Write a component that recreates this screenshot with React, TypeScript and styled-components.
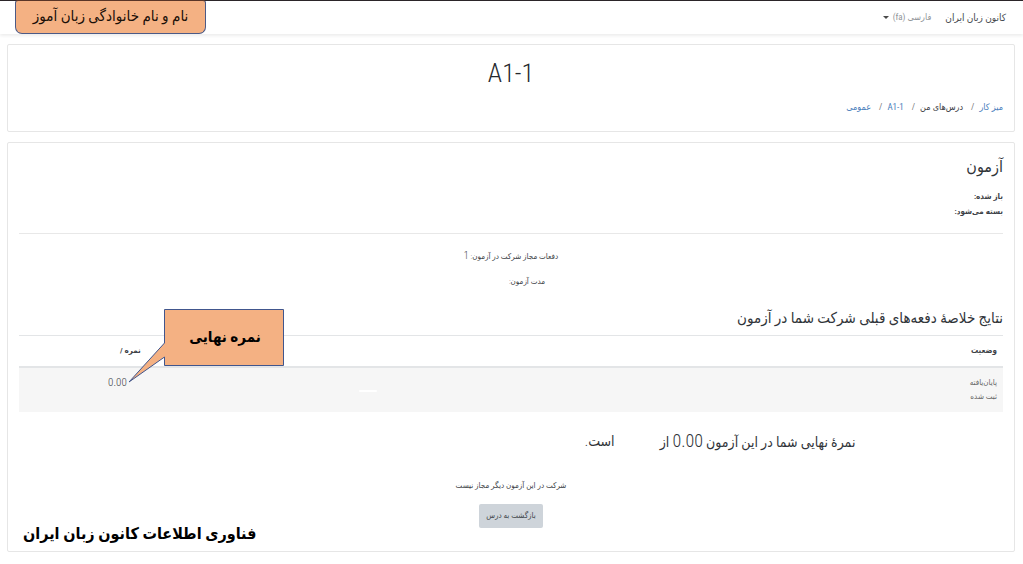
import React from 'react';
import styled, { createGlobalStyle } from 'styled-components';

const GlobalStyle = createGlobalStyle`
  * { box-sizing: border-box; }
  body {
    margin: 0;
    background: #fff;
    color: #3c4146;
    font: 9px/15px 'Roboto Condensed', Roboto, 'DejaVu Sans Condensed', 'DejaVu Sans', sans-serif;
    font-weight: 400;
  }
  h1, h2, h3, p { margin: 0; font-weight: 300; }
  a { color: #4a7ebb; text-decoration: none; }
`;

const Page = styled.div`
  direction: rtl;
  position: relative;
`;

const Navbar = styled.header`
  display: flex;
  align-items: center;
  height: 34px;
  padding: 0 17px;
  gap: 14px;
  border-top: 1px solid #2b2529;
  box-shadow: 0 2px 3px rgba(0, 0, 0, 0.07);
`;

const Brand = styled.a`
  color: #45494e;
  font-size: 10px;
`;

const LanguageButton = styled.button`
  display: flex;
  align-items: center;
  gap: 4px;
  padding: 0;
  border: 0;
  background: none;
  color: #8f9398;
  font: inherit;
`;

const Caret = styled.span`
  border: 3px solid transparent;
  border-top-color: #4a4a4a;
  border-bottom: 0;
`;

const NameTag = styled.div`
  position: absolute;
  top: 0;
  left: 15px;
  width: 191px;
  height: 34px;
  border: 1px solid #4c5a86;
  border-top-color: #5a3527;
  border-radius: 3px 3px 7px 7px;
  background: #f4b183;
  color: #1a0f08;
  font-size: 15px;
  line-height: 30px;
  text-align: center;
`;

const Main = styled.main`
  display: flex;
  flex-direction: column;
  gap: 10px;
  padding: 10px 8px 12px 7px;
`;

const Card = styled.section`
  position: relative;
  border: 1px solid #e6e6e6;
  border-radius: 2px;
  padding: 10px 11px;
`;

const HeaderCard = styled(Card)`
  min-height: 88px;
`;

const CourseTitle = styled.h1`
  font-size: 26px;
  line-height: 36px;
  text-align: center;
  color: #25282c;
`;

const Breadcrumb = styled.ol`
  display: flex;
  gap: 5px;
  margin: 9px 0 0;
  padding: 0;
  list-style: none;
`;

const Crumb = styled.li`
  & + &::before {
    content: '/';
    color: #777;
    padding-left: 8px;
  }
`;

const ActivityCard = styled(Card)`
  min-height: 410px;
`;

const Title = styled.h2`
  font-size: 16px;
  line-height: 28px;
  color: #303439;
`;

const Dates = styled.div`
  margin: 8px 0 14px;
  font-weight: 700;
  font-size: 8px;
`;

const Rule = styled.hr`
  margin: 0;
  border: 0;
  border-top: 1px solid #e8e8e8;
`;

const Info = styled.div`
  display: flex;
  flex-direction: column;
  gap: 10px;
  padding: 14px 0;
  font-size: 8px;
  text-align: center;
`;

const Duration = styled.p`
  padding-left: 32px;
`;

const Count = styled.span`
  font-size: 10px;
`;

const SectionTitle = styled.h3`
  font-size: 15px;
  line-height: 30px;
  color: #303439;
`;

const Attempts = styled.table`
  width: 100%;
  margin-top: 2px;
  border-collapse: collapse;
  table-layout: fixed;
`;

const HeadCell = styled.th<{ $width?: string; $center?: boolean }>`
  width: ${(p) => p.$width ?? 'auto'};
  height: 31px;
  padding: 0 6px;
  padding-left: ${(p) => (p.$center ? '32px' : '6px')};
  border-top: 1px solid #e3e5e7;
  border-bottom: 2px solid #e3e5e7;
  font-size: 8px;
  line-height: 14px;
  text-align: ${(p) => (p.$center ? 'center' : 'right')};
`;

const Cell = styled.td<{ $center?: boolean }>`
  height: 44px;
  padding: 8px 6px;
  background: #f6f6f6;
  font-size: ${(p) => (p.$center ? '11px' : '8px')};
  font-weight: ${(p) => (p.$center ? 300 : 400)};
  line-height: 14px;
  vertical-align: top;
  text-align: ${(p) => (p.$center ? 'center' : 'right')};
`;

const State = styled.span`
  display: block;
  color: #666;
`;

const BlankMark = styled.span`
  display: block;
  width: 18px;
  height: 2px;
  margin: 14px auto 0;
  border-radius: 1px;
  background: #fff;
`;

const FinalGrade = styled.h3`
  display: flex;
  gap: 45px;
  margin-top: 14px;
  padding-right: 15%;
  font-size: 14px;
  line-height: 30px;
  color: #303439;
`;

const Score = styled.span`
  font-size: 18px;
`;

const Feedback = styled.div`
  display: flex;
  flex-direction: column;
  align-items: center;
  gap: 11px;
  margin-top: 21px;
  font-size: 8px;
`;

const BackButton = styled.button`
  height: 24px;
  padding: 0 7px;
  border: 0;
  border-radius: 2px;
  background: #ced4da;
  color: #41464b;
  font: inherit;
`;

const Callout = styled.div`
  position: absolute;
  top: 166px;
  left: 120px;
  width: 157px;
  height: 76px;
`;

const CalloutShape = styled.svg`
  display: block;
`;

const CalloutText = styled.strong`
  position: absolute;
  top: 0;
  right: 0;
  width: 120px;
  color: #000;
  font-size: 15px;
  line-height: 56px;
  text-align: center;
`;

const Credit = styled.strong`
  position: absolute;
  left: 15px;
  bottom: 2px;
  color: #000;
  font-size: 16px;
  line-height: 30px;
`;

export default function App() {
  return (
    <Page lang="fa">
      <GlobalStyle />
      <Navbar>
        <Brand href="#">کانون زبان ایران</Brand>
        <LanguageButton type="button">
          <span>فارسی ‎(fa)‎</span>
          <Caret />
        </LanguageButton>
      </Navbar>
      <NameTag>نام و نام خانوادگی زبان آموز</NameTag>
      <Main>
        <HeaderCard>
          <CourseTitle>A1-1</CourseTitle>
          <nav>
            <Breadcrumb>
              <Crumb><a href="#">میز کار</a></Crumb>
              <Crumb>درس‌های من</Crumb>
              <Crumb><a href="#">A1-1</a></Crumb>
              <Crumb><a href="#">عمومی</a></Crumb>
            </Breadcrumb>
          </nav>
        </HeaderCard>
        <ActivityCard>
          <Title>آزمون</Title>
          <Dates>
            <div>باز شده:</div>
            <div>بسته می‌شود:</div>
          </Dates>
          <Rule />
          <Info>
            <p>دفعات مجاز شرکت در آزمون: <Count>1</Count></p>
            <Duration>مدت آزمون:</Duration>
          </Info>
          <SectionTitle>نتایج خلاصهٔ دفعه‌های قبلی شرکت شما در آزمون</SectionTitle>
          <Attempts>
            <thead>
              <tr>
                <HeadCell>وضعیت</HeadCell>
                <HeadCell $width="31%" />
                <HeadCell $width="20%" $center>نمره /</HeadCell>
              </tr>
            </thead>
            <tbody>
              <tr>
                <Cell>
                  <State>پایان‌یافته</State>
                  <State>ثبت شده</State>
                </Cell>
                <Cell><BlankMark /></Cell>
                <Cell $center>0.00</Cell>
              </tr>
            </tbody>
          </Attempts>
          <FinalGrade>
            <span>نمرهٔ نهایی شما در این آزمون <Score>0.00</Score> از</span>
            <span>است.</span>
          </FinalGrade>
          <Feedback>
            <p>شرکت در این آزمون دیگر مجاز نیست</p>
            <BackButton type="button">بازگشت به درس</BackButton>
          </Feedback>
          <Callout>
            <CalloutShape width="157" height="76" viewBox="0 0 157 76">
              <path
                d="M36.500 .5H155.500V56.500H36.500V48L1 73L36.500 34Z"
                fill="#f4b183"
                stroke="#41568d"
              />
            </CalloutShape>
            <CalloutText>نمره نهایی</CalloutText>
          </Callout>
          <Credit>فناوری اطلاعات کانون زبان ایران</Credit>
        </ActivityCard>
      </Main>
    </Page>
  );
}
